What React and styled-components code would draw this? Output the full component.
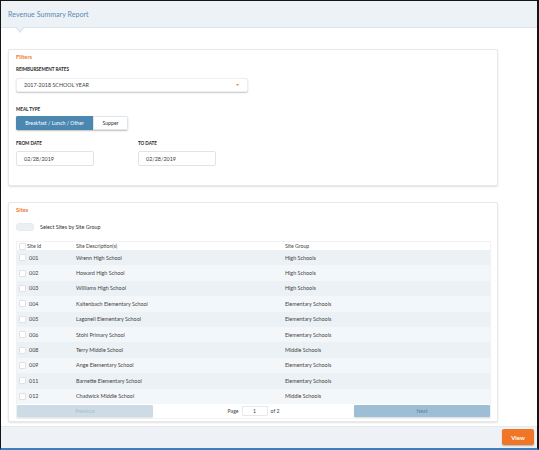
import React from 'react';
import styled, { createGlobalStyle } from 'styled-components';

const sites = [
  { id: '001', name: 'Wrenn High School', group: 'High Schools' },
  { id: '002', name: 'Howard High School', group: 'High Schools' },
  { id: '003', name: 'Williams High School', group: 'High Schools' },
  { id: '004', name: 'Kaltenbach Elementary School', group: 'Elementary Schools' },
  { id: '005', name: 'Lagonell Elementary School', group: 'Elementary Schools' },
  { id: '006', name: 'Stohl Primary School', group: 'Elementary Schools' },
  { id: '008', name: 'Terry Middle School', group: 'Middle Schools' },
  { id: '009', name: 'Ange Elementary School', group: 'Elementary Schools' },
  { id: '011', name: 'Barnette Elementary School', group: 'Elementary Schools' },
  { id: '012', name: 'Chadwick Middle School', group: 'Middle Schools' },
];

const GlobalStyle = createGlobalStyle`
  * { box-sizing: border-box; }
  body {
    margin: 0;
    background: #fff;
    font-family: Lato, "Open Sans", "Liberation Sans", sans-serif;
  }
`;

export default function App() {
  return (
    <>
      <GlobalStyle />
      <Frame>
        <Header>
          <Title>Revenue Summary Report</Title>
          <Notch />
        </Header>
        <Body>
          <Card>
            <CardTitle>Filters</CardTitle>
            <FieldLabel $top={4}>REIMBURSEMENT RATES</FieldLabel>
            <Select>
              <span>2017-2018 SCHOOL YEAR</span>
              <svg width="3" height="2" viewBox="0 0 3 2">
                <path d="M0 0 L3 0 L1.5 2 Z" fill="#f08a4b" />
              </svg>
            </Select>
            <FieldLabel $top={13}>MEAL TYPE</FieldLabel>
            <Toggle>
              <ToggleButton $active $w={77}>Breakfast / Lunch / Other</ToggleButton>
              <ToggleButton $w={35}>Supper</ToggleButton>
            </Toggle>
            <DateRow>
              <DateField>
                <FieldLabel $top={0}>FROM DATE</FieldLabel>
                <DateInput>02/28/2019</DateInput>
              </DateField>
              <DateField>
                <FieldLabel $top={0}>TO DATE</FieldLabel>
                <DateInput>02/28/2019</DateInput>
              </DateField>
            </DateRow>
          </Card>

          <Card $sites>
            <CardTitle>Sites</CardTitle>
            <SwitchRow>
              <Switch />
              <span>Select Sites by Site Group</span>
            </SwitchRow>
            <Table>
              <HeadRow>
                <CheckCell><Check /></CheckCell>
                <IdCell>Site Id</IdCell>
                <NameCell>Site Description(s)</NameCell>
                <GroupCell>Site Group</GroupCell>
              </HeadRow>
              {sites.map((s, i) => (
                <Row key={s.id} $odd={i % 2 === 0}>
                  <CheckCell><Check /></CheckCell>
                  <IdCell $row>{s.id}</IdCell>
                  <NameCell>{s.name}</NameCell>
                  <GroupCell>{s.group}</GroupCell>
                </Row>
              ))}
              <Pager>
                <PageButton $disabled>Previous</PageButton>
                <PageInfo>
                  Page <PageInput>1</PageInput> of 2
                </PageInfo>
                <PageButton>Next</PageButton>
              </Pager>
            </Table>
          </Card>
        </Body>
        <Footer>
          <ViewButton>View</ViewButton>
        </Footer>
      </Frame>
    </>
  );
}

const Frame = styled.div`
  width: 539px;
  height: 450px;
  display: flex;
  flex-direction: column;
  border: 1px solid #141414;
  border-right-width: 2px;
  border-bottom: 2px solid #3d80c2;
  background: #fff;
  overflow: hidden;
`;

const Header = styled.div`
  position: relative;
  height: 27px;
  flex: none;
  display: flex;
  align-items: center;
  padding-left: 7px;
  background: #edf2f6;
  border-bottom: 1px solid #dde5ec;
`;

const Title = styled.div`
  color: #5a8ab3;
  font-size: 7.1px;
`;

const Notch = styled.div`
  position: absolute;
  left: 14px;
  bottom: -6px;
  width: 0;
  height: 0;
  border-left: 5px solid transparent;
  border-right: 5px solid transparent;
  border-top: 6px solid #dde5ec;

  &::after {
    content: '';
    position: absolute;
    left: -4px;
    top: -7px;
    border-left: 4px solid transparent;
    border-right: 4px solid transparent;
    border-top: 5px solid #edf2f6;
  }
`;

const Body = styled.div`
  flex: 1;
  display: flex;
  flex-direction: column;
  gap: 16px;
  padding: 21px 39px 0 7px;
  background: #fff;
`;

const Card = styled.div`
  height: ${(p) => (p.$sites ? '220px' : '137px')};
  padding: 3px 6px 0 7px;
  background: #fff;
  border: 1px solid #e6e8ea;
  border-radius: 2px;
  box-shadow: 0 1px 2px rgba(0, 0, 0, 0.12);
`;

const CardTitle = styled.div`
  height: 8px;
  line-height: 8px;
  color: #ef7b30;
  font-size: 5.8px;
  font-weight: 700;
`;

const FieldLabel = styled.div`
  margin-top: ${(p) => p.$top}px;
  height: 8px;
  line-height: 8px;
  color: #262626;
  font-size: 4.6px;
  font-weight: 700;
  letter-spacing: -0.05px;
`;

const Select = styled.div`
  margin-top: 5px;
  width: 232px;
  height: 14px;
  display: flex;
  align-items: center;
  justify-content: space-between;
  padding: 0 8px 0 7px;
  color: #3d3d3d;
  font-size: 5.4px;
  background: #fff;
  border: 1px solid #eceef0;
  border-radius: 2px;
  box-shadow: 0 1px 1.5px rgba(0, 0, 0, 0.22);
`;

const Toggle = styled.div`
  margin-top: 3px;
  display: flex;
  width: fit-content;
  border-radius: 2px;
  box-shadow: 0 1px 1.5px rgba(0, 0, 0, 0.25);
  overflow: hidden;
`;

const ToggleButton = styled.div`
  width: ${(p) => p.$w}px;
  height: 14px;
  display: flex;
  align-items: center;
  justify-content: center;
  font-size: 5.2px;
  color: ${(p) => (p.$active ? '#fff' : '#333')};
  background: ${(p) => (p.$active ? '#4c87b1' : '#fff')};
  border: 1px solid ${(p) => (p.$active ? '#4c87b1' : '#e2e5e8')};
`;

const DateRow = styled.div`
  margin-top: 9px;
  display: flex;
  gap: 44px;
`;

const DateField = styled.div`
  display: flex;
  flex-direction: column;
  gap: 4px;
`;

const DateInput = styled.div`
  width: 78px;
  height: 15px;
  display: flex;
  align-items: center;
  padding-left: 7px;
  color: #3d3d3d;
  font-size: 5.4px;
  background: #fff;
  border: 1px solid #e1e4e7;
  border-radius: 2px;
`;

const SwitchRow = styled.div`
  margin-top: 8px;
  display: flex;
  align-items: center;
  gap: 6px;
  height: 9px;
  color: #333;
  font-size: 5.4px;
`;

const Switch = styled.div`
  width: 18px;
  height: 8px;
  border-radius: 4px;
  background: #eceff2;
  box-shadow: inset 0 0 1px rgba(0, 0, 0, 0.12);
`;

const Table = styled.div`
  margin-top: 10px;
  width: 475px;
  display: flex;
  flex-direction: column;
  border: 1px solid #f0f2f4;
`;

const HeadRow = styled.div`
  height: 8px;
  display: flex;
  align-items: center;
  background: #fff;
  color: #444;
  font-size: 5.2px;
`;

const Row = styled.div`
  height: 15.4px;
  display: flex;
  align-items: center;
  background: ${(p) => (p.$odd ? '#ecf1f5' : '#f4f7fa')};
  color: #444;
  font-size: 5.4px;
`;

const CheckCell = styled.div`
  width: 9px;
  padding-left: 2px;
  display: flex;
  align-items: center;
`;

const Check = styled.div`
  width: 7px;
  height: 7px;
  background: #fff;
  border: 1px solid #dfe3e6;
  border-radius: 1px;
`;

const IdCell = styled.div`
  width: 50px;
  padding-left: ${(p) => (p.$row ? '3px' : '1px')};
`;

const NameCell = styled.div`
  width: 209px;
`;

const GroupCell = styled.div`
  flex: 1;
`;

const Pager = styled.div`
  height: 14px;
  display: flex;
  align-items: center;
  padding-top: 1px;
  background: #fff;
`;

const PageButton = styled.div`
  width: 136px;
  height: 12px;
  display: flex;
  align-items: center;
  justify-content: center;
  font-size: 5.2px;
  color: ${(p) => (p.$disabled ? '#a9bccb' : '#5d7f99')};
  background: ${(p) => (p.$disabled ? '#cddbe6' : '#9dbed5')};
  border-radius: 1px;
  box-shadow: 0 1px 1px rgba(0, 0, 0, 0.12);
`;

const PageInfo = styled.div`
  flex: 1;
  display: flex;
  align-items: center;
  justify-content: center;
  gap: 3px;
  color: #444;
  font-size: 5.2px;
`;

const PageInput = styled.span`
  width: 26px;
  height: 10px;
  display: inline-flex;
  align-items: center;
  justify-content: center;
  border: 1px solid #e6e9ec;
  border-radius: 1px;
`;

const Footer = styled.div`
  flex: 1;
  display: flex;
  align-items: center;
  justify-content: flex-end;
  padding: 0 3px 1px 0;
  margin-top: 4px;
  background: #eef2f6;
  border-top: 1px solid #e4e9ee;
`;

const ViewButton = styled.div`
  width: 32px;
  height: 16px;
  display: flex;
  align-items: center;
  justify-content: center;
  color: #fff;
  font-size: 6px;
  font-weight: 700;
  background: #f07625;
  border-radius: 2px;
  box-shadow: 0 1px 1.5px rgba(0, 0, 0, 0.25);
`;
